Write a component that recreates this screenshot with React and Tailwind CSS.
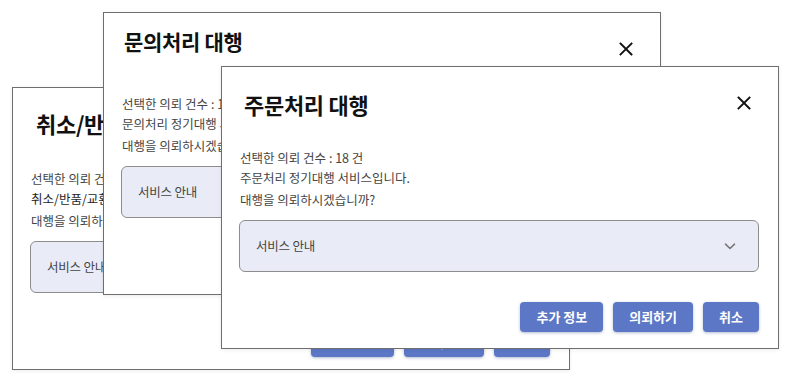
const FONT = { fontFamily: '"Noto Sans CJK KR", "Noto Sans", sans-serif' }

const dialogs = [
  {
    key: 'cancel',
    title: '취소/반품/교환 대행',
    titleClass: 'pl-[23px] mt-[21px] text-[22px]',
    service: '취소/반품/교환 정기대행 서비스입니다.',
    serviceClass: 'text-[#1f1f1f]',
    footerClass: 'mt-[34px]',
    pos: 'left-[12px] top-[87px]',
  },
  {
    key: 'inquiry',
    title: '문의처리 대행',
    titleClass: 'pl-[20px] mt-[14px] text-[21px]',
    service: '문의처리 정기대행 서비스입니다.',
    serviceClass: 'text-[#444]',
    footerClass: 'mt-[30px]',
    pos: 'left-[103px] top-[12px]',
  },
  {
    key: 'order',
    title: '주문처리 대행',
    titleClass: 'pl-[22px] mt-[23px] text-[22px]',
    service: '주문처리 정기대행 서비스입니다.',
    serviceClass: 'text-[#444]',
    footerClass: 'mt-[30px]',
    pos: 'left-[221px] top-[66px]',
  },
]

function CloseIcon() {
  return (
    <svg aria-hidden="true" className="h-[14px] w-[14px]" fill="none" stroke="#111" strokeLinecap="square" strokeWidth="1.9" viewBox="0 0 14 14">
      <path d="M1.5 1.5l11 11M12.5 1.5l-11 11" />
    </svg>
  )
}

function Dialog({ title, titleClass, service, serviceClass, footerClass, pos }) {
  return (
    <div
      className={`absolute ${pos} h-[283px] w-[558px] border border-[#6e6e6e] bg-white shadow-[0_1px_4px_rgba(0,0,0,0.08)]`}
      style={FONT}
    >
      <div className="flex h-[60px] items-start justify-between pr-[27px]">
        <h2 className={`${titleClass} font-bold leading-[28px] tracking-[-0.3px] text-[#111]`}>{title}</h2>
        <button className="mt-[29px]" type="button" aria-label="닫기">
          <CloseIcon />
        </button>
      </div>

      <div className="pl-[17px] pr-[19px] pt-[21px]">
        <div className="pl-px text-[12.5px] text-[#444]">
          <p className="leading-[20px]">선택한 의뢰 건수 : 18 건</p>
          <p className={`leading-[20px] ${serviceClass}`}>{service}</p>
          <p className="mt-px leading-[22px]">대행을 의뢰하시겠습니까?</p>
        </div>

        <div className="mt-[9px] flex h-[52px] items-center justify-between rounded-[6px] border border-[#8d8d8d] bg-[#e9ecf7] pl-[16px] pr-[22px]">
          <span className="text-[12.5px] tracking-[-0.2px] text-[#444]">서비스 안내</span>
          <svg aria-hidden="true" className="h-[7px] w-[12px]" fill="none" stroke="#777" strokeLinecap="round" strokeLinejoin="round" strokeWidth="1.6" viewBox="0 0 12 7">
            <path d="M1.5 1.2L6 5.5l4.5-4.3" />
          </svg>
        </div>

        <div className={`${footerClass} flex justify-end gap-[10px]`}>
          {['추가 정보', '의뢰하기', '취소'].map((label) => (
            <button
              key={label}
              className="h-[30px] rounded-[4px] bg-[#5b77c6] px-4 text-[13px] font-bold text-white shadow-[0_1px_3px_rgba(40,60,120,0.35)]"
              type="button"
            >
              {label}
            </button>
          ))}
        </div>
      </div>
    </div>
  )
}

export default function App() {
  return (
    <div className="relative h-[378px] w-[794px] overflow-hidden bg-white">
      {dialogs.map((d) => (
        <Dialog key={d.key} {...d} />
      ))}
    </div>
  )
}
